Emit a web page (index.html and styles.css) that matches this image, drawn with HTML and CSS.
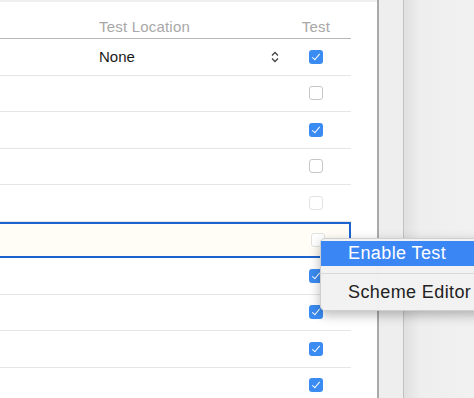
FILE: index.html
```html
<!DOCTYPE html>
<html lang="en">
<head>
    <meta charset="UTF-8">
    <title>Scheme Tests</title>
    <link rel="stylesheet" href="styles.css">
</head>
<body>
    <div class="window">
        <!-- Tests table -->
        <div class="table-pane">
            <div class="table">
                <div class="row header">
                    <div></div>
                    <div class="col-location">Test Location</div>
                    <div class="col-test">Test</div>
                </div>
                <div class="row">
                    <div></div>
                    <div class="col-location location">
                        <span>None</span>
                        <svg class="stepper" width="8" height="12" viewBox="0 0 8 12">
                            <path d="M1 4.5 L4 1.5 L7 4.5 M1 7.5 L4 10.5 L7 7.5" fill="none" stroke="#444" stroke-width="1.3"/>
                        </svg>
                    </div>
                    <div class="col-test"><span class="check on"></span></div>
                </div>
                <div class="row">
                    <div></div><div></div>
                    <div class="col-test"><span class="check"></span></div>
                </div>
                <div class="row">
                    <div></div><div></div>
                    <div class="col-test"><span class="check on"></span></div>
                </div>
                <div class="row">
                    <div></div><div></div>
                    <div class="col-test"><span class="check"></span></div>
                </div>
                <div class="row">
                    <div></div><div></div>
                    <div class="col-test"><span class="check off"></span></div>
                </div>
                <div class="row selected">
                    <div></div><div></div>
                    <div class="col-test"><span class="check off"></span></div>
                </div>
                <div class="row">
                    <div></div><div></div>
                    <div class="col-test"><span class="check on"></span></div>
                </div>
                <div class="row">
                    <div></div><div></div>
                    <div class="col-test"><span class="check on"></span></div>
                </div>
                <div class="row">
                    <div></div><div></div>
                    <div class="col-test"><span class="check on"></span></div>
                </div>
                <div class="row">
                    <div></div><div></div>
                    <div class="col-test"><span class="check on"></span></div>
                </div>
            </div>
        </div>
        <div class="split"></div>
        <div class="gutter"></div>
        <div class="split light"></div>
        <div class="inspector"></div>

        <!-- Context menu -->
        <div class="menu">
            <div class="menu-item active">Enable Test</div>
            <div class="menu-sep"></div>
            <div class="menu-item">Scheme Editor</div>
        </div>
    </div>
</body>
</html>
```

FILE: styles.css
```css
body {
    margin: 0;
    font-family: "Liberation Sans", Arial, sans-serif;
    background-color: #f0f0f0;
    overflow: hidden;
}
.window {
    position: relative;
    display: flex;
    height: 398px;
}
.table-pane {
    width: 377px;
    margin-top: 2px;
    background: white;
    overflow: hidden;
}
.table {
    margin-left: -4px;
    width: 355px;
}
.row {
    display: grid;
    grid-template-columns: 103px 190px 54px 1fr;
    align-items: center;
    height: 36.5px;
    box-sizing: border-box;
    border-bottom: 1px solid #e6e6e6;
}
.row.header {
    height: 37px;
    border-bottom: 1px solid #b8b8b8;
    color: #a8a8a8;
    font-size: 15px;
    letter-spacing: 0.2px;
    padding-top: 12px;
}
.row.selected {
    border: 2px solid #1c63cf;
    background-color: #fffdf6;
}
.col-test {
    display: flex;
    justify-content: center;
}
.location {
    display: flex;
    justify-content: space-between;
    align-items: center;
    padding-right: 10px;
    font-size: 15px;
    color: #1a1a1a;
}
.check {
    display: block;
    width: 14px;
    height: 14px;
    box-sizing: border-box;
    border: 1px solid #c6c6c6;
    border-radius: 3px;
    background: white;
    position: relative;
}
.check.off {
    border-color: #e2e2e2;
}
.check.on {
    border: none;
    background-color: #3a8bf2;
}
.check.on::after {
    content: "";
    position: absolute;
    left: 5px;
    top: 2px;
    width: 3px;
    height: 7px;
    border-right: 1.6px solid white;
    border-bottom: 1.6px solid white;
    transform: rotate(40deg);
}
.split {
    width: 2px;
    background-color: #a9a9a9;
}
.split.light {
    width: 1px;
    background-color: #c2c2c2;
}
.gutter {
    width: 24px;
    background-color: #eeeeee;
}
.inspector {
    flex: 1;
    background: linear-gradient(to right, #e0e0e0, #eeeeee 16px, #f1f1f1);
}
.menu {
    position: absolute;
    left: 320px;
    top: 238px;
    width: 170px;
    padding: 2px 0 5px;
    background-color: rgba(242, 242, 242, 0.98);
    border: 1px solid #cfcfcf;
    border-radius: 5px;
    box-shadow: 0 4px 12px rgba(0, 0, 0, 0.28);
    box-sizing: border-box;
}
.menu-item {
    height: 25px;
    line-height: 25px;
    padding-left: 27px;
    font-size: 18px;
    letter-spacing: 0.4px;
    color: #222;
    white-space: nowrap;
}
.menu-item.active {
    background-color: #3a86f4;
    color: white;
}
.menu-sep {
    height: 1px;
    margin: 7px 0 6px;
    background-color: #d9d9d9;
}
```
